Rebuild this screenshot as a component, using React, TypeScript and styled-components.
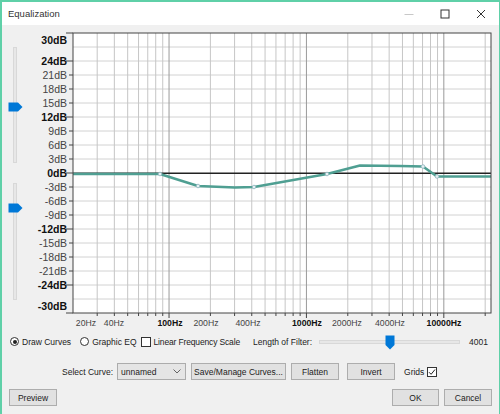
import styled, { createGlobalStyle } from "styled-components";

const GlobalStyle = createGlobalStyle`
  html, body { margin: 0; padding: 0; background: #fff; }
  body { font-family: "Liberation Sans", Arial, sans-serif; }
  * { box-sizing: border-box; }
`;

// graph geometry, in page pixels
const X0 = 73;
const X1 = 491;
const Y0 = 33;
const Y1 = 313;
const fx = (f: number) => X0 + ((X1 - X0) * Math.log10(f / 20)) / Math.log10(22050 / 20);
const dy = (db: number) => 173 - (db * 140) / 30;

const gridFreqs: { f: number; major: boolean }[] = [];
[10, 100, 1000, 10000].forEach((d) => {
  for (let m = 1; m <= 9; m++) {
    const f = m * d;
    if (f > 20 && f < 22050) gridFreqs.push({ f, major: m === 1 });
  }
});

const gridDbs: number[] = [];
for (let db = -27; db <= 27; db += 3) if (db !== 0) gridDbs.push(db);

const dbLabels: { text: string; y: number; major: boolean }[] = [
  { text: "30dB", y: 40, major: true },
];
for (let db = 24; db >= -24; db -= 3) {
  dbLabels.push({ text: `${db}dB`, y: dy(db), major: db % 12 === 0 });
}
dbLabels.push({ text: "-30dB", y: 306, major: true });

const hzLabels = [
  { text: "20Hz", x: 86, major: false },
  { text: "40Hz", x: 114, major: false },
  { text: "100Hz", x: 170, major: true },
  { text: "200Hz", x: 206, major: false },
  { text: "400Hz", x: 248, major: false },
  { text: "1000Hz", x: 307, major: true },
  { text: "2000Hz", x: 347, major: false },
  { text: "4000Hz", x: 390, major: false },
  { text: "10000Hz", x: 444, major: true },
];

const curve: [number, number][] = [
  [X0, 174],
  [160, 174],
  [198, 186],
  [235, 187.5],
  [254, 187],
  [327, 174],
  [360, 165.5],
  [400, 166],
  [423, 166.5],
  [437, 176.5],
  [X1, 176.5],
];
const handles: [number, number][] = [
  [160, 174],
  [198, 186],
  [254, 187],
  [327, 174],
  [423, 166.5],
  [437, 176.5],
];

const Window = styled.div`
  width: 500px;
  height: 414px;
  border-top: 2px solid #5fd0a8;
  border-left: 2px solid #5fd0a8;
  border-right: 1px solid #5fd0a8;
  background: #f0f0f0;
  display: flex;
  flex-direction: column;
  overflow: hidden;
  color: #222;
`;

const TitleBar = styled.div`
  height: 23px;
  background: #fff;
  display: flex;
  align-items: center;
  padding-left: 6px;
`;

const Title = styled.span`
  flex: 1;
  font-size: 9.5px;
  color: #333;
`;

const CaptionButton = styled.div`
  width: 36px;
  height: 23px;
  display: flex;
  align-items: center;
  justify-content: center;
`;

const EqPanel = styled.div`
  height: 306px;
  display: flex;
`;

const SliderColumn = styled.div`
  width: 28px;
  display: flex;
  flex-direction: column;
  padding-top: 22px;
  gap: 20px;
`;

const VTrack = styled.div<{ $h: number }>`
  position: relative;
  margin-left: 11px;
  width: 4px;
  height: ${(p) => p.$h}px;
  background: #e7e7e7;
  border: 1px solid #d8d8d8;
`;

const VThumb = styled.svg<{ $top: number }>`
  position: absolute;
  left: -6px;
  top: ${(p) => p.$top - 5}px;
`;

const ChartSvg = styled.svg`
  display: block;
  font-family: "Liberation Sans", Arial, sans-serif;
`;

const Row = styled.div<{ $top: number; $h: number }>`
  display: flex;
  align-items: center;
  margin-top: ${(p) => p.$top}px;
  height: ${(p) => p.$h}px;
  font-size: 8.5px;
  white-space: nowrap;
`;

const OptionsRow = styled(Row)`
  padding-left: 8px;
  padding-right: 11px;
`;

const Radio = styled.span<{ $on?: boolean }>`
  width: 9px;
  height: 9px;
  border-radius: 50%;
  border: 1px solid #333;
  background: #fff;
  display: inline-flex;
  align-items: center;
  justify-content: center;
  margin-right: 3px;
  &::after {
    content: "";
    width: 4px;
    height: 4px;
    border-radius: 50%;
    background: ${(p) => (p.$on ? "#222" : "transparent")};
  }
`;

const Box = styled.span`
  width: 10px;
  height: 10px;
  border: 1px solid #333;
  background: #fff;
  display: inline-flex;
  align-items: center;
  justify-content: center;
`;

const Option = styled.label<{ $gap: number }>`
  display: flex;
  align-items: center;
  margin-right: ${(p) => p.$gap}px;
`;

const BoxText = styled.span`
  margin-left: 3px;
  letter-spacing: -0.15px;
`;

const FilterGroup = styled.div`
  margin-left: auto;
  width: 235px;
  display: flex;
  align-items: center;
`;

const HTrack = styled.div`
  position: relative;
  flex: 1;
  height: 4px;
  margin: 0 9px 0 7px;
  background: #e7e7e7;
  border: 1px solid #d8d8d8;
`;

const HThumb = styled.svg<{ $pos: number }>`
  position: absolute;
  top: -6px;
  left: calc(${(p) => p.$pos}% - 5px);
`;

const CurveRow = styled(Row)`
  padding-left: 60px;
`;

const Select = styled.div`
  width: 69px;
  height: 17px;
  margin-left: 4px;
  margin-right: 5px;
  padding: 0 4px 0 3px;
  display: flex;
  align-items: center;
  justify-content: space-between;
  background: #e5e5e5;
  border: 1px solid #acacac;
`;

const Button = styled.div<{ $w: number; $gap?: number }>`
  width: ${(p) => p.$w}px;
  height: 17px;
  margin-right: ${(p) => p.$gap ?? 0}px;
  display: flex;
  align-items: center;
  justify-content: center;
  background: #e1e1e1;
  border: 1px solid #adadad;
  font-size: 8.5px;
`;

const GridsLabel = styled.span`
  margin-right: 3px;
`;

const FooterRow = styled(Row)`
  padding: 0 7px;
  gap: 5px;
`;

const Spacer = styled.div`
  flex: 1;
`;

const Check = () => (
  <svg width="8" height="8" viewBox="0 0 8 8">
    <path d="M1 4.2 L3.1 6.3 L7 1.5" fill="none" stroke="#222" strokeWidth="1" />
  </svg>
);

const VSlider = ({ h, pos }: { h: number; pos: number }) => (
  <VTrack $h={h}>
    <VThumb $top={pos} width="15" height="10" viewBox="0 0 15 10">
      <path d="M0.5 0.5 H10 L14.5 5 L10 9.5 H0.5 Z" fill="#0078d7" />
    </VThumb>
  </VTrack>
);

const Chart = () => (
  <ChartSvg viewBox="30 25 469 306" width={469} height={306}>
    <rect x={X0} y={Y0} width={X1 - X0} height={Y1 - Y0} fill="#fff" />
    {gridDbs.map((db) => (
      <line key={db} x1={X0} x2={X1} y1={dy(db)} y2={dy(db)} stroke="#d2d2d2" strokeWidth="1" />
    ))}
    {gridFreqs.map(({ f, major }) => (
      <line
        key={f}
        x1={fx(f)}
        x2={fx(f)}
        y1={Y0}
        y2={Y1}
        stroke={major ? "#9a9a9a" : "#c6c6c6"}
        strokeWidth="1"
      />
    ))}
    <line x1={X0} x2={X1} y1={173.3} y2={173.3} stroke="#222" strokeWidth="1.5" />
    <polyline
      points={curve.map((p) => p.join(",")).join(" ")}
      fill="none"
      stroke="#4f9f92"
      strokeWidth="2.6"
      strokeLinejoin="round"
    />
    {handles.map(([x, y]) => (
      <circle key={x} cx={x} cy={y} r="1.8" fill="#e6f0f2" stroke="#8fb6bf" strokeWidth="0.8" />
    ))}
    <rect x={X0} y={Y0} width={X1 - X0} height={Y1 - Y0} fill="none" stroke="#444" strokeWidth="1" />
    {dbLabels.map((l) => (
      <line
        key={"t" + l.text}
        x1={l.major ? 66 : 69}
        x2={X0}
        y1={l.text === "30dB" ? Y0 : l.text === "-30dB" ? Y1 : l.y}
        y2={l.text === "30dB" ? Y0 : l.text === "-30dB" ? Y1 : l.y}
        stroke="#444"
        strokeWidth="1"
      />
    ))}
    {dbLabels.map((l) => (
      <text
        key={l.text}
        x={67}
        y={l.y}
        textAnchor="end"
        dominantBaseline="central"
        fontSize="10.5"
        fontWeight={l.major ? 700 : 400}
        fill={l.major ? "#111" : "#444"}
      >
        {l.text}
      </text>
    ))}
    {gridFreqs.map(({ f, major }) => (
      <line key={"b" + f} x1={fx(f)} x2={fx(f)} y1={Y1} y2={Y1 + (major ? 5 : 3)} stroke="#444" />
    ))}
    {hzLabels.map((l) => (
      <text
        key={l.text}
        x={l.x}
        y={323}
        textAnchor="middle"
        dominantBaseline="central"
        fontSize="8.7"
        fontWeight={l.major ? 700 : 400}
        fill={l.major ? "#111" : "#444"}
      >
        {l.text}
      </text>
    ))}
  </ChartSvg>
);

export default function App() {
  return (
    <>
      <GlobalStyle />
      <Window>
        <TitleBar>
          <Title>Equalization</Title>
          <CaptionButton>
            <svg width="10" height="10" viewBox="0 0 10 10">
              <line x1="0.5" x2="9.5" y1="5.5" y2="5.5" stroke="#c8c8c8" />
            </svg>
          </CaptionButton>
          <CaptionButton>
            <svg width="10" height="10" viewBox="0 0 10 10">
              <rect x="1" y="1" width="8" height="8" fill="none" stroke="#333" />
            </svg>
          </CaptionButton>
          <CaptionButton>
            <svg width="10" height="10" viewBox="0 0 10 10">
              <path d="M1 1 L9 9 M9 1 L1 9" stroke="#333" strokeWidth="1" />
            </svg>
          </CaptionButton>
        </TitleBar>

        <EqPanel>
          <SliderColumn>
            <VSlider h={116} pos={58.5} />
            <VSlider h={117} pos={24} />
          </SliderColumn>
          <Chart />
        </EqPanel>

        <OptionsRow $top={0} $h={21}>
          <Option $gap={9}>
            <Radio $on />
            Draw Curves
          </Option>
          <Option $gap={4}>
            <Radio />
            Graphic EQ
          </Option>
          <Option $gap={0}>
            <Box />
            <BoxText>Linear Frequency Scale</BoxText>
          </Option>
          <FilterGroup>
            <span>Length of Filter:</span>
            <HTrack>
              <HThumb $pos={50} width="10" height="15" viewBox="0 0 10 15">
                <path d="M0.5 0.5 H9.5 V10 L5 14.5 L0.5 10 Z" fill="#0078d7" />
              </HThumb>
            </HTrack>
            <span>4001</span>
          </FilterGroup>
        </OptionsRow>

        <CurveRow $top={11} $h={17}>
          <span>Select Curve:</span>
          <Select>
            <span>unnamed</span>
            <svg width="8" height="5" viewBox="0 0 8 5">
              <path d="M0.5 0.5 L4 4 L7.5 0.5" fill="none" stroke="#555" strokeWidth="0.9" />
            </svg>
          </Select>
          <Button $w={95} $gap={5}>Save/Manage Curves...</Button>
          <Button $w={48} $gap={8}>Flatten</Button>
          <Button $w={48} $gap={9}>Invert</Button>
          <GridsLabel>Grids</GridsLabel>
          <Box>
            <Check />
          </Box>
        </CurveRow>

        <FooterRow $top={9} $h={17}>
          <Button $w={48}>Preview</Button>
          <Spacer />
          <Button $w={47}>OK</Button>
          <Button $w={48}>Cancel</Button>
        </FooterRow>
      </Window>
    </>
  );
}
